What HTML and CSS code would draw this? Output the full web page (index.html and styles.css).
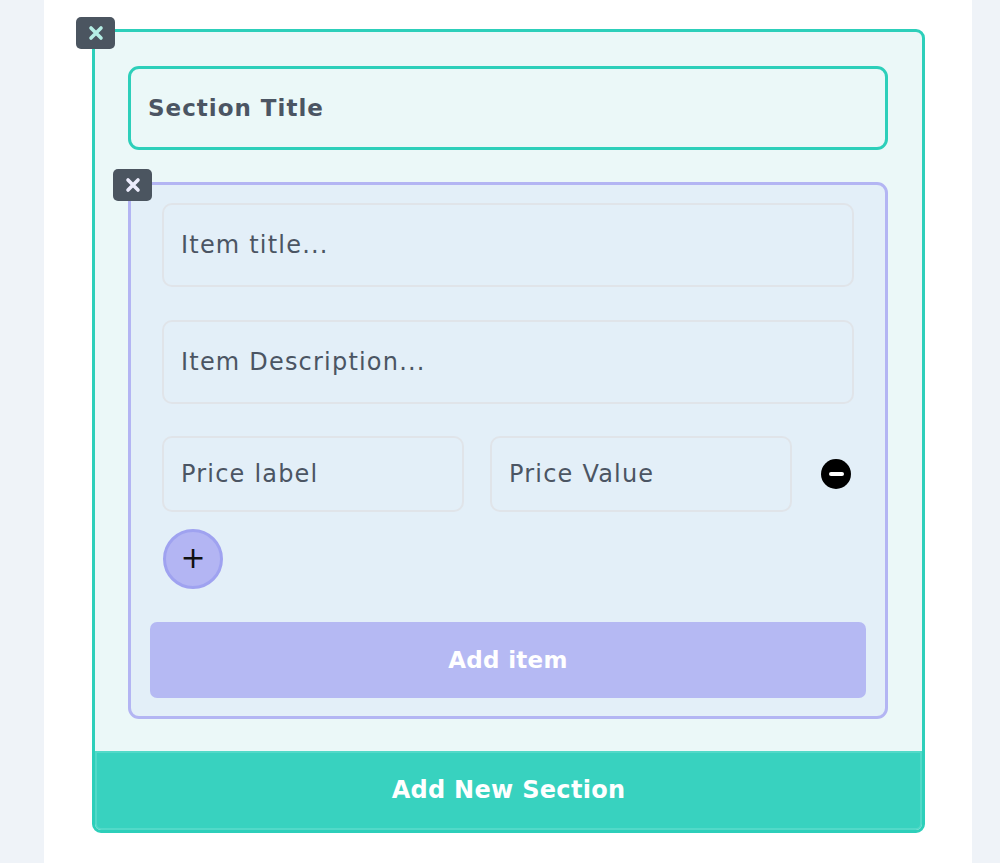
FILE: index.html
```html
<!DOCTYPE html>
<html lang="en">
<head>
	<meta charset="UTF-8">
	<title>Menu sections</title>
	<link rel="stylesheet" href="styles.css">
</head>
<body>
	<div class="page">
		<div class="section-card">
			<button class="close close-section"><svg width="16" height="16" viewBox="0 0 16 16"><path d="M3 3L13 13M13 3L3 13"/></svg></button>
			<div class="section-body">
				<div class="section-title">Section Title</div>
				<div class="item-card">
					<button class="close close-item"><svg width="16" height="16" viewBox="0 0 16 16"><path d="M3 3L13 13M13 3L3 13"/></svg></button>
					<div class="item-fields">
						<div class="field">Item title...</div>
						<div class="field">Item Description...</div>
						<div class="price-row">
							<div class="field field-price">Price label</div>
							<div class="field field-price">Price Value</div>
							<div class="remove-wrap"><span class="remove"></span></div>
						</div>
						<div class="add-price">+</div>
					</div>
					<div class="add-item">Add item</div>
				</div>
			</div>
			<div class="add-section">Add New Section</div>
		</div>
	</div>
</body>
</html>
```

FILE: styles.css
```css
*{
	margin:0;
	padding:0;
	box-sizing:border-box;
}
body{
	background:#eff3f8;
	font-family:"DejaVu Sans",Inter,sans-serif;
	color:#4b5563;
}
.page{
	width:928px;
	min-height:863px;
	margin-left:44px;
	background:#fff;
	padding:29px 47px 0 48px;
}
.section-card{
	position:relative;
	border:3px solid #2dcfba;
	border-radius:9px;
	background:#ebf8f8;
}
.section-body{
	padding:34px 34px 32px 33px;
}
.close{
	position:absolute;
	width:39px;
	height:32px;
	border:none;
	border-radius:5px;
	background:#4b5560;
	display:flex;
	align-items:center;
	justify-content:center;
}
.close svg{
	fill:none;
	stroke-width:3.6;
	stroke-linecap:round;
}
.close-section{
	left:-19px;
	top:-15px;
}
.close-section svg{
	stroke:#b4eee5;
}
.close-item{
	left:-18px;
	top:-16px;
}
.close-item svg{
	stroke:#ececfc;
}
.section-title{
	height:84px;
	border:3px solid #2dcfba;
	border-radius:11px;
	padding-left:17px;
	font-size:23px;
	font-weight:700;
	letter-spacing:1px;
	line-height:78px;
}
.item-card{
	position:relative;
	margin-top:32px;
	border:3px solid #b3b5f3;
	border-radius:11px;
	background:#e3eff8;
	padding:18px 19px;
}
.item-fields{
	padding:0 12px;
}
.field{
	height:84px;
	border:2px solid #e0e4e9;
	border-radius:10px;
	padding-left:17px;
	font-size:24px;
	letter-spacing:1.2px;
	line-height:80px;
	margin-bottom:33px;
}
.price-row{
	display:flex;
	gap:26px;
	margin-top:-1px;
}
.field-price{
	flex:0 0 302px;
	height:76px;
	line-height:72px;
	margin-bottom:0;
}
.remove-wrap{
	flex:1;
	display:flex;
	align-items:center;
	justify-content:center;
}
.remove{
	width:30px;
	height:30px;
	border-radius:50%;
	background:#000;
	display:flex;
	align-items:center;
	justify-content:center;
}
.remove:after{
	content:'';
	width:15px;
	height:4px;
	border-radius:2px;
	background:#fff;
}
.add-price{
	margin-top:17px;
	margin-left:1px;
	width:60px;
	height:60px;
	border-radius:50%;
	border:3px solid #9fa2f0;
	background:#b3b5f3;
	color:#111;
	font-size:30px;
	line-height:52px;
	text-align:center;
}
.add-item{
	margin-top:33px;
	height:76px;
	border-radius:7px;
	background:#b5b9f3;
	color:#fff;
	font-size:23px;
	font-weight:700;
	letter-spacing:0.3px;
	line-height:76px;
	text-align:center;
}
.add-section{
	height:79px;
	border:2px solid #52d9c8;
	border-radius:0 0 6px 6px;
	background:#38d2bf;
	color:#fff;
	font-size:24px;
	font-weight:700;
	letter-spacing:0.3px;
	line-height:75px;
	text-align:center;
}
```
